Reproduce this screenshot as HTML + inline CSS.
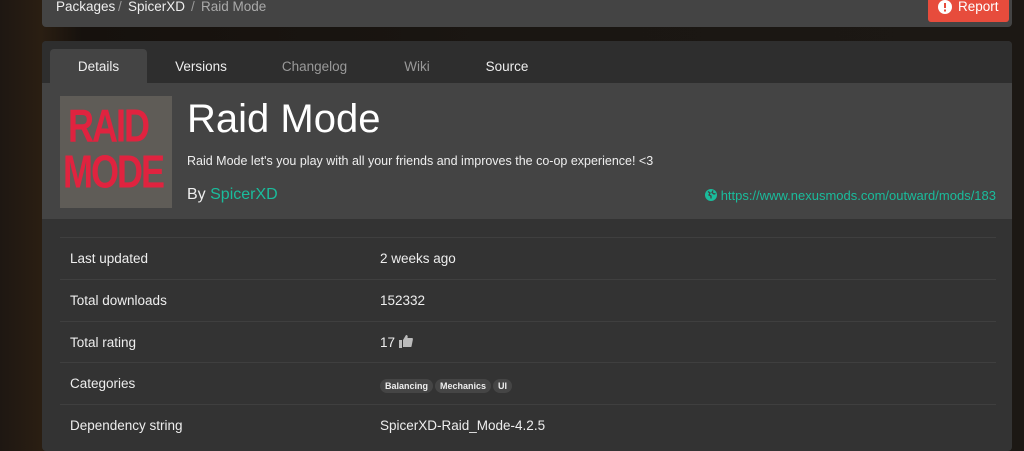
<!DOCTYPE html>
<html><head><meta charset="utf-8"><style>
*{margin:0;padding:0;box-sizing:border-box}
body{width:1024px;height:443px;overflow:hidden;background:linear-gradient(90deg,#1e1712 0%,#2a1e12 4%,#16110d 8%,#1a1612 50%,#1c1814 100%);font-family:"Liberation Sans",sans-serif;color:#eee;position:relative}
.bc{position:absolute;left:42px;top:-10px;width:970px;height:37px;background:#444;border-radius:4px}
.bc span{position:absolute;top:9px;font-size:13.5px}
.rep{position:absolute;left:928px;top:-14px;width:81px;height:36px;background:#e74c3c;border-radius:3px;color:#fff;font-size:13.5px}
.card{position:absolute;left:42px;top:41px;width:970px;height:410px;background:#333;border-radius:4px;overflow:hidden}
.tabs{height:42px;background:#2e2e2e;position:relative}
.tab{position:absolute;font-size:13.5px;text-align:center}
.head{height:136px;background:#444;position:relative}
.img{position:absolute;left:18px;top:13px;width:112px;height:112px;background:#5f5c57;overflow:hidden}
.img div{position:absolute;color:#e0233f;font-weight:bold;font-family:"Liberation Sans",sans-serif;font-size:36px;letter-spacing:-2px;transform:scaleY(1.3);line-height:1}
.row{position:absolute;left:18px;width:936px;border-top:1px solid #3f3f3f;font-size:13.5px}
.row .l{position:absolute;left:10px}
.row .v{position:absolute;left:320px}
.pill{display:inline-block;background:#454545;border-radius:8px;font-size:9px;font-weight:bold;padding:2px 5px;margin-right:2px}
</style></head><body>
<div class="bc">
<span style="left:14px">Packages</span><span style="left:76px;color:#999">/</span>
<span style="left:86px">SpicerXD</span><span style="left:149px;color:#999">/</span>
<span style="left:159px;color:#aaa">Raid Mode</span>
</div>
<div class="rep"><svg style="position:absolute;left:10px;top:14px" width="14" height="14" viewBox="0 0 14 14"><circle cx="7" cy="7" r="7" fill="#fff"/><rect x="6" y="3" width="2" height="5" fill="#e74c3c"/><rect x="6" y="9.5" width="2" height="2" fill="#e74c3c"/></svg><span style="position:absolute;left:30px;top:13px">Report</span></div>
<div class="card">
<div class="tabs">
<div style="position:absolute;left:8px;top:8px;width:97px;height:34px;background:#444;border-radius:4px 4px 0 0"></div>
<div class="tab" style="left:8px;width:97px;top:18px">Details</div>
<div class="tab" style="left:118px;width:82px;top:18px">Versions</div>
<div class="tab" style="left:230px;width:85px;top:18px;color:#999">Changelog</div>
<div class="tab" style="left:350px;width:50px;top:18px;color:#999">Wiki</div>
<div class="tab" style="left:435px;width:60px;top:18px">Source</div>
</div>
<div class="head">
<div class="img"><div style="left:8px;top:12px">RAID</div><div style="left:3px;top:58px">MODE</div></div>
<div style="position:absolute;left:145px;top:14px;font-size:40px;color:#fff">Raid Mode</div>
<div style="position:absolute;left:145px;top:71px;font-size:12.5px">Raid Mode let's you play with all your friends and improves the co-op experience! &lt;3</div>
<div style="position:absolute;left:145px;top:103px;font-size:16px">By <span style="color:#1abc9c">SpicerXD</span></div>
<div style="position:absolute;right:16px;top:105px;font-size:13px;color:#1abc9c"><svg width="12" height="12" viewBox="0 0 12 12" style="vertical-align:-1px;margin-right:4px"><circle cx="6" cy="6" r="6" fill="#1abc9c"/><path d="M3 2.5l2 1.5-1 2 2 1v2.5M8 1.5l-1 2 2 1.5 1.5-.5" stroke="#444" stroke-width="1.3" fill="none"/></svg>https://www.nexusmods.com/outward/mods/183</div>
</div>
<div class="row" style="top:196px;height:42px"><span class="l" style="top:13px">Last updated</span><span class="v" style="top:13px">2 weeks ago</span></div>
<div class="row" style="top:238px;height:42px"><span class="l" style="top:13px">Total downloads</span><span class="v" style="top:13px">152332</span></div>
<div class="row" style="top:280px;height:42px"><span class="l" style="top:13px">Total rating</span><span class="v" style="top:13px">17 <svg width="14" height="13" viewBox="0 0 14 13" style="vertical-align:-1px"><rect x="0" y="5" width="3" height="8" fill="#bbb"/><path d="M4 5l3-5c1.5 0 2 1 1.5 3H13c1 0 1 1 .8 2l-1.3 6.5c-.2.5-.5.5-1 .5H4z" fill="#bbb"/></svg></span></div>
<div class="row" style="top:321px;height:42px"><span class="l" style="top:13px">Categories</span><span class="v" style="top:14px"><span class="pill">Balancing</span><span class="pill">Mechanics</span><span class="pill">UI</span></span></div>
<div class="row" style="top:363px;height:42px"><span class="l" style="top:13px">Dependency string</span><span class="v" style="top:13px">SpicerXD-Raid_Mode-4.2.5</span></div>
</div>
</body></html>
